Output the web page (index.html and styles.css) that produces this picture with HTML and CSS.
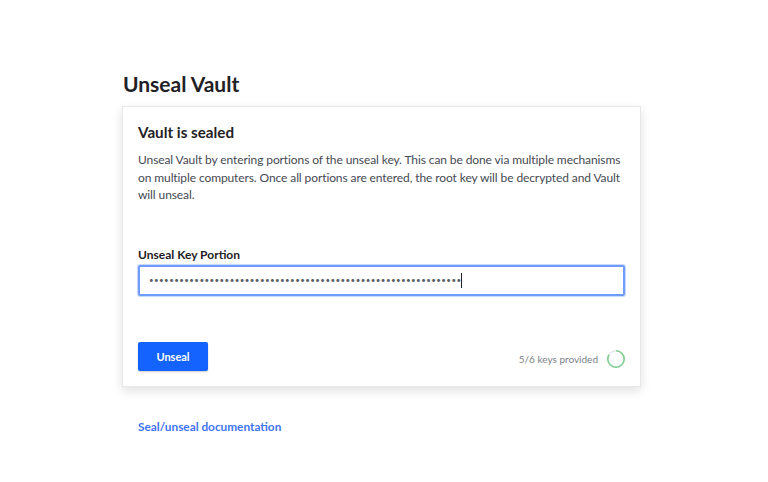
FILE: index.html
```html
<!DOCTYPE html>
<html>
<head>
<meta charset="utf-8">
<link rel="stylesheet" href="styles.css">
</head>
<body>
<main class="page">
  <h1 class="page-title">Unseal Vault</h1>
  <section class="card">
    <h2 class="card-title">Vault is sealed</h2>
    <p class="card-text">Unseal Vault by entering portions of the unseal key. This can be done via multiple mechanisms on multiple computers. Once all portions are entered, the root key will be decrypted and Vault will unseal.</p>
    <div class="field">
      <label class="field-label">Unseal Key Portion</label>
      <div class="input"><span class="dots">••••••••••••••••••••••••••••••••••••••••••••••••••••••••••••••</span><span class="caret"></span></div>
    </div>
    <div class="card-footer">
      <button class="btn">Unseal</button>
      <div class="progress">
        <span class="progress-text">5/6 keys provided</span>
        <svg class="ring" width="20" height="20" viewBox="0 0 20 20">
          <circle cx="10" cy="10" r="8.2" fill="none" stroke="#e6e8eb" stroke-width="1.6"/>
          <circle cx="10" cy="10" r="8.2" fill="none" stroke="#7fd08f" stroke-width="1.6" stroke-dasharray="42.9 51.5" transform="rotate(-90 10 10)"/>
        </svg>
      </div>
    </div>
  </section>
  <a class="doc-link" href="#">Seal/unseal documentation</a>
</main>
</body>
</html>
```
FILE: styles.css
```css
html, body {
  margin: 0;
  padding: 0;
  background: #ffffff;
}
body {
  font-family: Lato, "Noto Sans", sans-serif;
  color: #1f2126;
}
.page {
  width: 519px;
  margin-left: 122px;
  padding-top: 71px;
  display: flex;
  flex-direction: column;
}
.page-title {
  margin: 0 0 9px 1px;
  font-size: 21px;
  font-weight: 700;
  line-height: 26px;
  color: #1f2126;
}
.card {
  border: 1px solid #e6e7ea;
  box-shadow: 0 4px 10px rgba(0,0,0,0.12);
  padding: 15px 15px 15px 15px;
  display: flex;
  flex-direction: column;
}
.card-title {
  margin: 0;
  font-size: 15.2px;
  font-weight: 700;
  line-height: 20px;
}
.card-text {
  margin: 9px 0 0 0;
  font-size: 12px;
  letter-spacing: -0.1px;
  line-height: 17.5px;
  color: #464952;
}
.field {
  margin-top: 43px;
  display: flex;
  flex-direction: column;
}
.field-label {
  font-size: 12px;
  font-weight: 700;
  line-height: 15px;
  margin-bottom: 3px;
}
.input {
  height: 27px;
  border: 2px solid #6f9cfb;
  border-radius: 2px;
  box-shadow: 0 0 0 1px #c9dafd;
  display: flex;
  align-items: center;
  padding-left: 9px;
  font-size: 8px;
  color: #5a5d66;
}
.dots {
  letter-spacing: 0.4px;
}
.caret {
  display: inline-block;
  width: 1px;
  height: 15px;
  background: #1f2126;
  margin-left: 0;
}
.card-footer {
  margin-top: 46px;
  display: flex;
  align-items: center;
  justify-content: space-between;
}
.btn {
  width: 70px;
  height: 29px;
  background: #1563ff;
  color: #ffffff;
  border: none;
  border-radius: 2px;
  font-family: inherit;
  font-size: 11px;
  font-weight: 700;
  box-shadow: 0 1px 2px rgba(0,0,0,0.2);
  padding: 0;
}
.progress {
  display: flex;
  align-items: center;
  gap: 8px;
  margin-right: -1px;
  margin-top: 5px;
}
.progress-text {
  font-size: 10px;
  color: #7c7f87;
}
.ring {
  display: block;
}
.doc-link {
  margin: 32px 0 0 16px;
  font-size: 11.8px;
  font-weight: 700;
  color: #3e74f0;
  text-decoration: none;
}
```
